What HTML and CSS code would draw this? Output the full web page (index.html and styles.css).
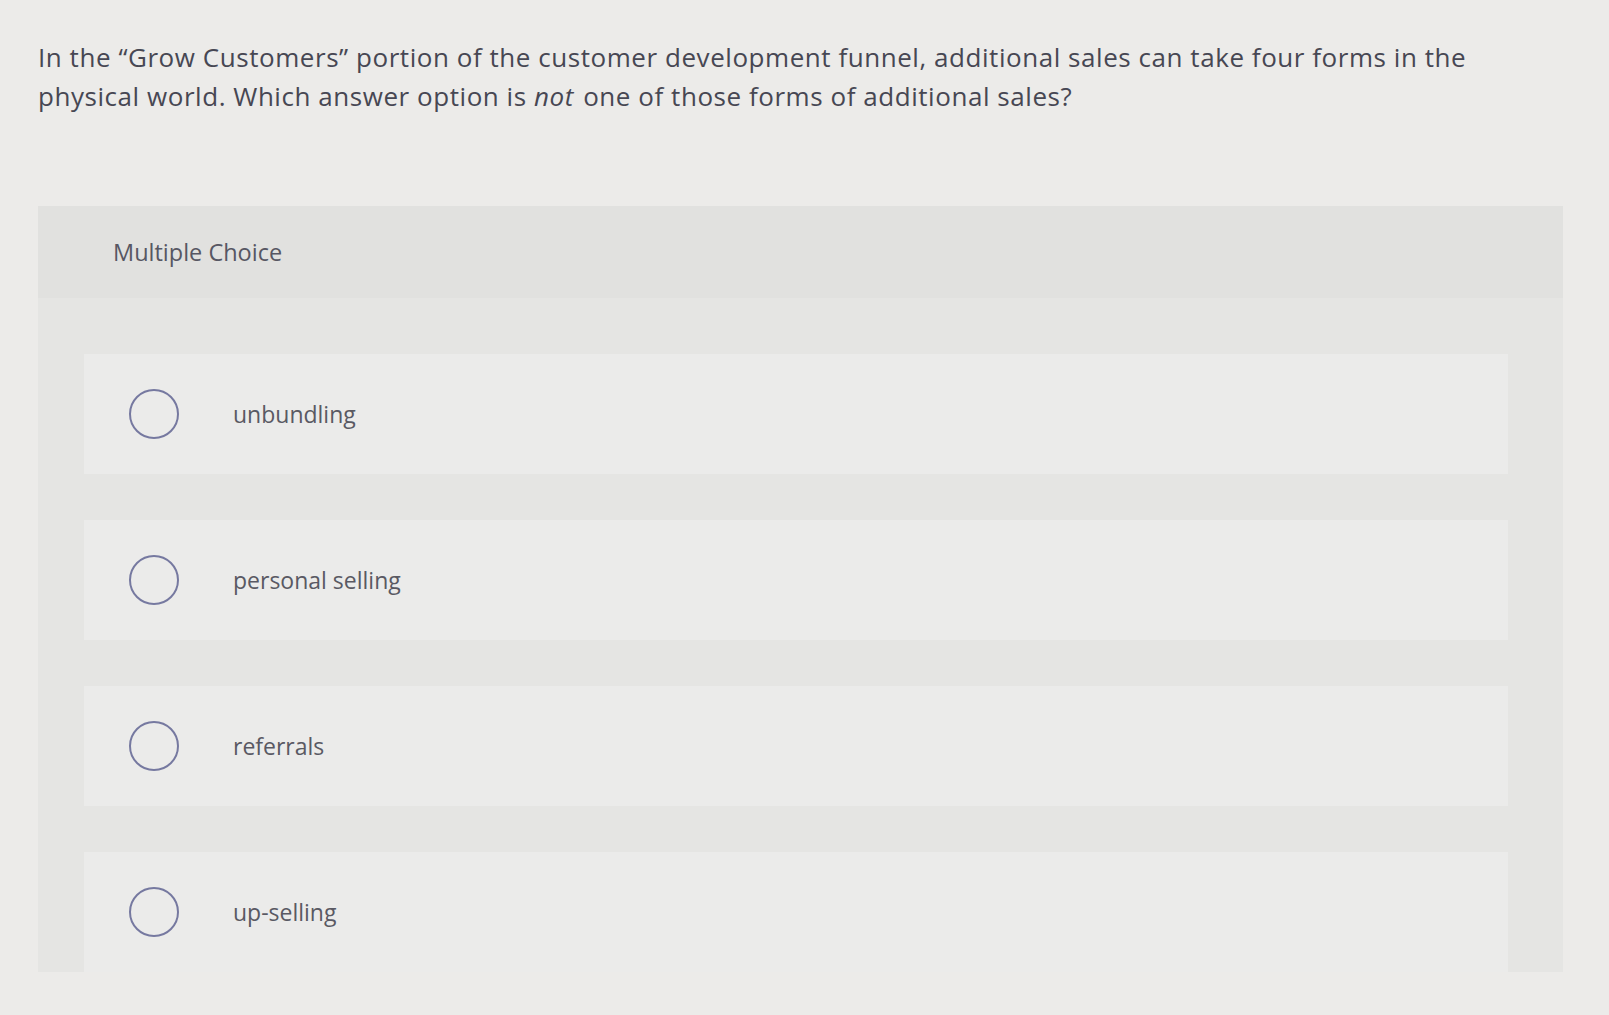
FILE: index.html
```html
<!DOCTYPE html>
<html lang="en">
<head>
<meta charset="utf-8">
<title>Multiple Choice</title>
<link rel="stylesheet" href="styles.css">
</head>
<body>
<main class="page">
  <p class="question">In the “Grow Customers” portion of the customer development funnel, additional sales can take four forms in the physical world. Which answer option is <em>not</em> one of those forms of additional sales?</p>
  <section class="panel">
    <header class="panel-head">Multiple Choice</header>
    <div class="options">
      <label class="option"><span class="radio"></span><span class="label">unbundling</span></label>
      <label class="option"><span class="radio"></span><span class="label">personal selling</span></label>
      <label class="option"><span class="radio"></span><span class="label">referrals</span></label>
      <label class="option"><span class="radio"></span><span class="label">up-selling</span></label>
    </div>
  </section>
</main>
</body>
</html>
```
FILE: styles.css
```css
html, body {
  margin: 0;
  padding: 0;
}
body {
  background: #ecebe9;
  font-family: "Open Sans", Lato, sans-serif;
  color: #4b4b57;
  width: 1609px;
  height: 1015px;
  overflow: hidden;
}
.page {
  padding: 38px 46px 0 38px;
}
.question {
  margin: 0;
  font-size: 26px;
  letter-spacing: 0.55px;
  line-height: 39px;
  max-width: 1450px;
  color: #474753;
}
.question em {
  font-style: italic;
  display: inline-block;
  margin-right: 2px;
}
.panel {
  margin-top: 90px;
  background: #e5e5e3;
  width: 1525px;
  height: 766px;
}
.panel-head {
  height: 92px;
  display: flex;
  align-items: center;
  padding-left: 75px;
  background: #e1e1df;
  font-size: 23.5px;
  color: #575763;
}
.options {
  display: flex;
  flex-direction: column;
  gap: 46px;
  padding: 56px 55px 0 46px;
}
.option {
  display: flex;
  align-items: center;
  height: 120px;
  padding-left: 45px;
  background: #ebebea;
}
.radio {
  width: 46px;
  height: 46px;
  border: 2px solid #7679a0;
  border-radius: 50%;
  flex: none;
}
.label {
  margin-left: 54px;
  font-size: 23px;
  color: #595963;
}
```
